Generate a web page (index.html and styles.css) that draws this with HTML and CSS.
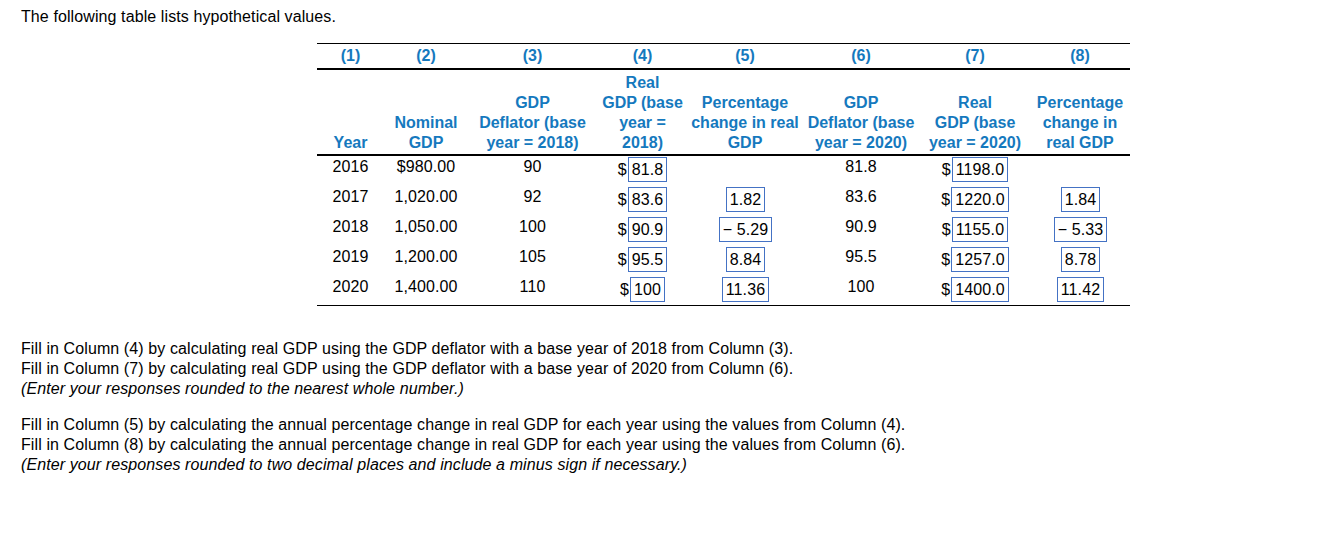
FILE: index.html
```html
<!DOCTYPE html>
<html lang="en">
<head>
<meta charset="utf-8">
<title>Real GDP table</title>
<link rel="stylesheet" href="styles.css">
</head>
<body>
<div class="page">
  <p class="intro">The following table lists hypothetical values.</p>
  <table class="gdp">
    <colgroup>
      <col class="c1"><col class="c2"><col class="c3"><col class="c4">
      <col class="c5"><col class="c6"><col class="c7"><col class="c8">
    </colgroup>
    <thead>
      <tr class="nums">
        <th>(1)</th><th>(2)</th><th>(3)</th><th>(4)</th>
        <th>(5)</th><th>(6)</th><th>(7)</th><th>(8)</th>
      </tr>
      <tr class="titles">
        <th>Year</th>
        <th>Nominal<br>GDP</th>
        <th>GDP<br>Deflator (base<br>year = 2018)</th>
        <th>Real<br>GDP (base<br>year =<br>2018)</th>
        <th>Percentage<br>change in real<br>GDP</th>
        <th>GDP<br>Deflator (base<br>year = 2020)</th>
        <th>Real<br>GDP (base<br>year = 2020)</th>
        <th>Percentage<br>change in<br>real GDP</th>
      </tr>
    </thead>
    <tbody>
      <tr class="row">
        <td>2016</td><td>$980.00</td><td>90</td>
        <td>$<span class="box">81.8</span></td>
        <td></td>
        <td>81.8</td>
        <td>$<span class="box">1198.0</span></td>
        <td></td>
      </tr>
      <tr class="row">
        <td>2017</td><td>1,020.00</td><td>92</td>
        <td>$<span class="box">83.6</span></td>
        <td><span class="box">1.82</span></td>
        <td>83.6</td>
        <td>$<span class="box">1220.0</span></td>
        <td><span class="box">1.84</span></td>
      </tr>
      <tr class="row">
        <td>2018</td><td>1,050.00</td><td>100</td>
        <td>$<span class="box">90.9</span></td>
        <td><span class="box">&minus;&nbsp;5.29</span></td>
        <td>90.9</td>
        <td>$<span class="box">1155.0</span></td>
        <td><span class="box">&minus;&nbsp;5.33</span></td>
      </tr>
      <tr class="row">
        <td>2019</td><td>1,200.00</td><td>105</td>
        <td>$<span class="box">95.5</span></td>
        <td><span class="box">8.84</span></td>
        <td>95.5</td>
        <td>$<span class="box">1257.0</span></td>
        <td><span class="box">8.78</span></td>
      </tr>
      <tr class="row last">
        <td>2020</td><td>1,400.00</td><td>110</td>
        <td>$<span class="box">100</span></td>
        <td><span class="box">11.36</span></td>
        <td>100</td>
        <td>$<span class="box">1400.0</span></td>
        <td><span class="box">11.42</span></td>
      </tr>
    </tbody>
  </table>
  <div class="instructions">
    <p>Fill in Column (4) by calculating real GDP using the GDP deflator with a base year of 2018 from Column (3).<br>
    Fill in Column (7) by calculating real GDP using the GDP deflator with a base year of 2020 from Column (6).<br>
    <em>(Enter your responses rounded to the nearest whole number.)</em></p>
    <p>Fill in Column (5) by calculating the annual percentage change in real GDP for each year using the values from Column (4).<br>
    Fill in Column (8) by calculating the annual percentage change in real GDP for each year using the values from Column (6).<br>
    <em>(Enter your responses rounded to two decimal places and include a minus sign if necessary.)</em></p>
  </div>
</div>
</body>
</html>
```

FILE: styles.css
```css
html, body {
  margin: 0;
  padding: 0;
  background: #ffffff;
}

body {
  font-family: "Liberation Sans", Arial, sans-serif;
  font-size: 16px;
  line-height: 20px;
  letter-spacing: 0.1px;
  color: #000000;
}

.page {
  padding: 7px 21px 0 21px;
}

.intro {
  margin: 0 0 16px 0;
}

.gdp {
  margin-left: 296px;
  width: 813px;
  table-layout: fixed;
  border-collapse: separate;
  border-spacing: 0;
  border-top: 1px solid #000000;
}

.c1 { width: 67px; }
.c2 { width: 84px; }
.c3 { width: 129px; }
.c4 { width: 91px; }
.c5 { width: 114px; }
.c6 { width: 118px; }
.c7 { width: 110px; }
.c8 { width: 100px; }

.gdp th {
  color: #1579be;
  font-weight: bold;
  text-align: center;
  white-space: nowrap;
  padding: 0;
  letter-spacing: 0;
}

.nums {
  height: 26px;
}

.nums th {
  vertical-align: top;
  padding-top: 2px;
  border-bottom: 2px solid #000000;
}

.titles {
  height: 86px;
}

.titles th {
  vertical-align: bottom;
  padding-bottom: 1px;
  border-bottom: 2px solid #000000;
}

.row {
  height: 30px;
}

.row td {
  vertical-align: top;
  text-align: center;
  white-space: nowrap;
  padding: 1px 0 0 0;
}

.row.last td {
  border-bottom: 1px solid #000000;
}

.box {
  display: inline-block;
  box-sizing: border-box;
  height: 25px;
  padding: 2px 3px 1px 3px;
  margin-left: 1px;
  border: 1px solid #4472c4;
  line-height: 20px;
}

.instructions {
  margin-top: 33px;
}

.instructions p {
  margin: 0 0 16px 0;
}

.instructions em {
  font-style: italic;
}
```
